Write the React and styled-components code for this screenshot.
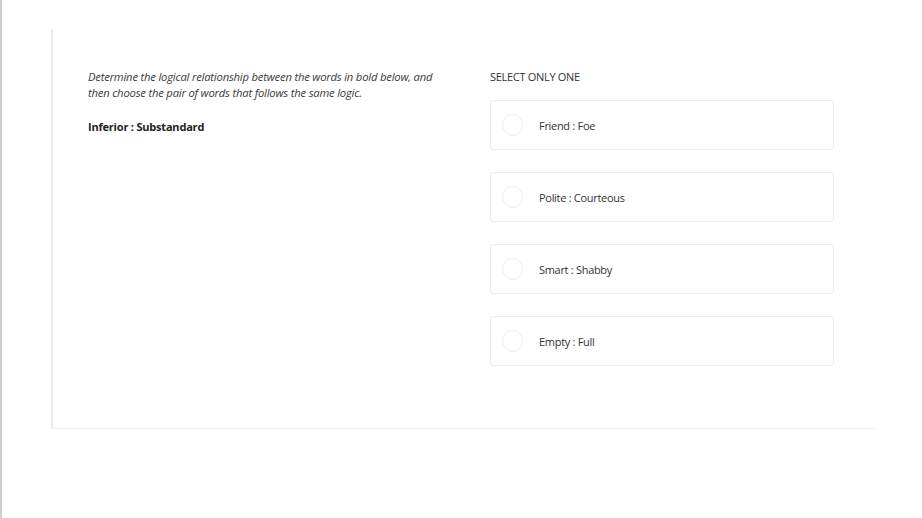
import React from 'react'
import styled, { createGlobalStyle } from 'styled-components'

const Global = createGlobalStyle`
body { margin: 0; background: #fff; font-family: 'Open Sans', 'Noto Sans', sans-serif; }
`

const Page = styled.div`
min-height: 518px;
border-left: 2px solid #cfcfcf;
padding: 30px 0 0 49px;
box-sizing: border-box;
`

const Panel = styled.div`
width: 826px;
height: 399px;
box-sizing: border-box;
border-left: 2px solid #ececec;
border-bottom: 1px solid #f3f3f3;
padding: 39px 0 0 35px;
display: flex;
`

const Left = styled.div`width: 402px;`
const Right = styled.div`width: 344px;`

const Prompt = styled.p`
margin: 0;
font-style: italic;
font-size: 11.25px;
line-height: 16px;
color: #3a3a3a;
width: 360px;
letter-spacing: -0.2px;
`

const Pair = styled.p`
margin: 18px 0 0;
font-weight: 700;
font-size: 11px;
line-height: 16px;
color: #222;
letter-spacing: -0.2px;
`

const Label = styled.div`
font-size: 11px;
line-height: 16px;
color: #333;
letter-spacing: -0.3px;
margin-bottom: 15px;
`

const Options = styled.div`
display: flex;
flex-direction: column;
gap: 22px;
`

const Option = styled.label`
height: 50px;
box-sizing: border-box;
border: 1px solid #ececec;
border-radius: 3px;
display: flex;
align-items: center;
padding-left: 11px;
cursor: pointer;
`

const Radio = styled.span`
flex-shrink: 0;
width: 19px;
height: 20px;
border-radius: 50%;
border: 1px solid #eeeeee;
margin-right: 16px;
`

const Text = styled.span`
font-size: 11px;
color: #333;
letter-spacing: -0.3px;
`

const options = ['Friend : Foe', 'Polite : Courteous', 'Smart : Shabby', 'Empty : Full']

export default function App() {
  return (
    <Page>
      <Global />
      <Panel>
        <Left>
          <Prompt>Determine the logical relationship between the words in bold below, and then choose the pair of words that follows the same logic.</Prompt>
          <Pair>Inferior : Substandard</Pair>
        </Left>
        <Right>
          <Label>SELECT ONLY ONE</Label>
          <Options>
            {options.map(o => (
              <Option key={o}>
                <Radio />
                <Text>{o}</Text>
              </Option>
            ))}
          </Options>
        </Right>
      </Panel>
    </Page>
  )
}
